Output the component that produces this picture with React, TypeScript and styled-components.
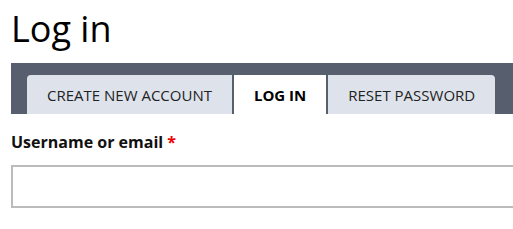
import styled, { createGlobalStyle } from "styled-components";

const GlobalStyle = createGlobalStyle`
  html, body {
    margin: 0;
    padding: 0;
    overflow: hidden;
    background: #fff;
  }
  body {
    font-family: "Open Sans", "Noto Sans", sans-serif;
    color: #222;
  }
`

const tabs = [
  { label: "CREATE NEW ACCOUNT", active: false },
  { label: "LOG IN", active: true },
  { label: "RESET PASSWORD", active: false },
]

const App = (): JSX.Element => {
  return (
    <>
      <GlobalStyle />
      <Page>
        <Title>Log in</Title>
        <TabBar>
          {tabs.map((tab) => (
            <Tab key={tab.label} $active={tab.active}>{tab.label}</Tab>
          ))}
        </TabBar>
        <Field>
          <Label htmlFor="name">
            Username or email <Required>*</Required>
          </Label>
          <InputClip>
            <Input id="name" type="text" />
          </InputClip>
        </Field>
      </Page>
    </>
  )
}

export default App;

const Page = styled.div`
  padding: 4px 0 0 11px;
  overflow: hidden;
`
const Title = styled.h1`
  margin: 0 0 10px;
  font-size: 36px;
  font-weight: 400;
  line-height: 49px;
  color: #000;
`
const TabBar = styled.ul`
  display: flex;
  gap: 2px;
  margin: 0;
  padding: 12px 0 0 16px;
  list-style: none;
  background: #575e6e;
`
const Tab = styled.li<{ $active: boolean }>`
  height: 39px;
  display: flex;
  align-items: center;
  padding: 0 20px;
  font-size: 15px;
  font-weight: ${(p) => (p.$active ? 700 : 400)};
  color: ${(p) => (p.$active ? "#000" : "#222")};
  background: ${(p) => (p.$active ? "#fff" : "#dee2eb")};
  &:first-child {
    border-top-left-radius: 4px;
  }
  &:last-child {
    border-top-right-radius: 4px;
  }
`
const Field = styled.div`
  display: flex;
  flex-direction: column;
  padding-top: 17px;
`
const Label = styled.label`
  font-size: 16px;
  font-weight: 700;
  line-height: 22px;
  color: #111;
  margin-bottom: 12px;
`
const Required = styled.span`
  color: #e00;
`
const InputClip = styled.div`
  overflow: hidden;
`
const Input = styled.input`
  display: block;
  box-sizing: border-box;
  width: calc(100% + 20px);
  height: 43px;
  border: 2px solid #bbb;
  margin: 0;
  padding: 0 8px;
  font-size: 15px;
  font-family: inherit;
  outline: none;
`
